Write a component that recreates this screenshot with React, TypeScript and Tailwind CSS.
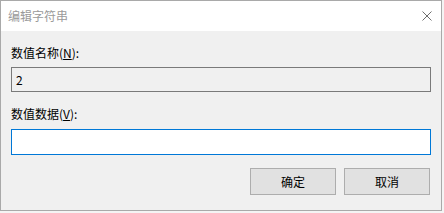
export default function App() {
  return (
    <div className="h-[213px] w-[444px] bg-[#f4f4f4] font-['Noto_Sans_CJK_SC','Liberation_Sans',sans-serif] text-[12px]">
      {/* 窗口 */}
      <div className="flex h-[211px] w-[442px] flex-col border border-[#a9a9a9] bg-[#f0f0f0]">
        {/* 标题栏 */}
        <div className="flex h-[30px] items-center justify-between bg-white pl-[7px] pr-[9px]">
          <span className="leading-[16px] text-[#9a9a9a]">编辑字符串</span>
          <svg width="10" height="10" viewBox="0 0 10 10" className="block">
            <path d="M0.5 0.5 L9.5 9.5 M9.5 0.5 L0.5 9.5" stroke="#6e6e6e" strokeWidth="1" fill="none" />
          </svg>
        </div>

        {/* 内容 */}
        <div className="flex flex-1 flex-col px-[10px] pt-[14px]">
          <label className="block leading-[16px] text-black">
            数值名称(<span className="underline">N</span>):
          </label>
          <div className="mt-[6px] flex h-[25px] items-center border border-[#7a7a7a] bg-[#f0f0f0] pl-[4px] text-black">
            2
          </div>

          <label className="mt-[14px] block leading-[16px] text-black">
            数值数据(<span className="underline">V</span>):
          </label>
          <input
            type="text"
            className="mt-[7px] h-[26px] w-full border border-[#0078d7] bg-white px-[4px] outline-none"
          />

          <div className="mt-[13px] flex justify-end gap-[8px] pr-[1px]">
            <button className="h-[27px] w-[86px] border border-[#adadad] bg-[#e1e1e1] text-black">
              确定
            </button>
            <button className="h-[27px] w-[86px] border border-[#adadad] bg-[#e1e1e1] text-black">
              取消
            </button>
          </div>
        </div>
      </div>
    </div>
  );
}
